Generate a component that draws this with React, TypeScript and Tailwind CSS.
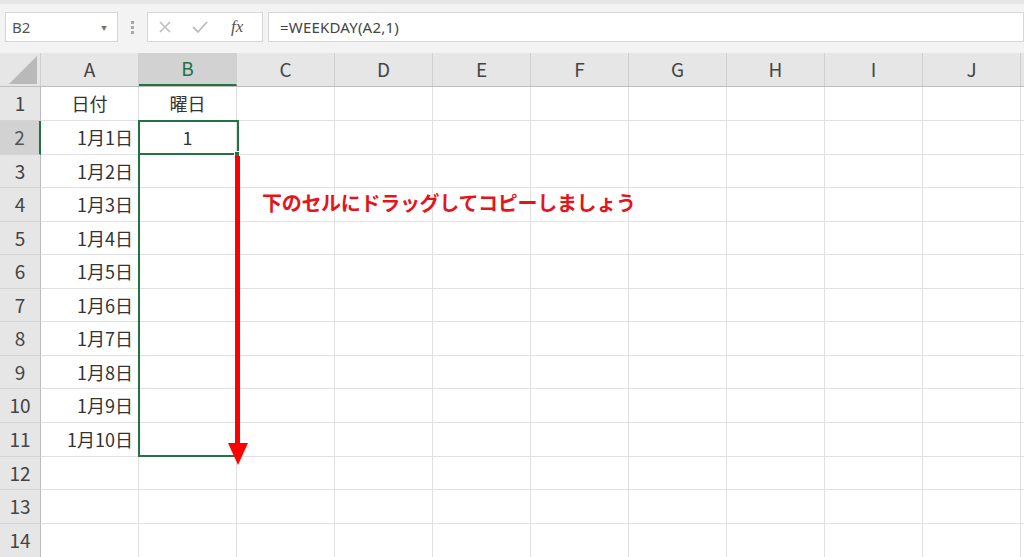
import React from "react";

const columns = ["A", "B", "C", "D", "E", "F", "G", "H", "I", "J"];

// row heights alternate a little in the shot (33.5px average)
const rows = [
  { n: 1, h: "h-[34px]", a: "日付", b: "曜日" },
  { n: 2, h: "h-[34px]", a: "1月1日", b: "1" },
  { n: 3, h: "h-[33px]", a: "1月2日", b: "" },
  { n: 4, h: "h-[34px]", a: "1月3日", b: "" },
  { n: 5, h: "h-[33px]", a: "1月4日", b: "" },
  { n: 6, h: "h-[34px]", a: "1月5日", b: "" },
  { n: 7, h: "h-[33px]", a: "1月6日", b: "" },
  { n: 8, h: "h-[34px]", a: "1月7日", b: "" },
  { n: 9, h: "h-[33px]", a: "1月8日", b: "" },
  { n: 10, h: "h-[34px]", a: "1月9日", b: "" },
  { n: 11, h: "h-[34px]", a: "1月10日", b: "" },
  { n: 12, h: "h-[33px]", a: "", b: "" },
  { n: 13, h: "h-[34px]", a: "", b: "" },
  { n: 14, h: "h-[34px]", a: "", b: "" },
];

const font = "font-['Noto_Sans_CJK_JP','Noto_Sans',sans-serif]";

export default function App() {
  return (
    <div
      className={`w-[1024px] h-[557px] overflow-hidden bg-[#f3f3f3] text-[#444] ${font}`}
    >
      {/* top strip */}
      <div className="h-[12px] border-t-[4px] border-[#e6e6e6]" />

      {/* formula bar */}
      <div className="h-[30px] flex items-stretch">
        <div className="ml-[5px] w-[113px] bg-white border border-[#d6d6d6] flex items-center justify-between pl-[6px] pr-[10px]">
          <span className="text-[15px] text-[#555] font-['Noto_Sans',sans-serif]">B2</span>
          <span className="text-[6px] text-[#777]">▼</span>
        </div>
        <div className="w-[29px] flex items-center justify-center">
          <div className="flex flex-col gap-[2px]">
            <span className="w-[3px] h-[3px] bg-[#a8a8a8]" />
            <span className="w-[3px] h-[3px] bg-[#a8a8a8]" />
            <span className="w-[3px] h-[3px] bg-[#a8a8a8]" />
          </div>
        </div>
        <div className="w-[116px] bg-white border border-[#d6d6d6] flex items-center pl-[10px] gap-[20px]">
          <svg width="14" height="14" viewBox="0 0 14 14">
            <path d="M2 2 L12 12 M12 2 L2 12" stroke="#bdbdbd" strokeWidth="1.6" fill="none" />
          </svg>
          <svg width="16" height="14" viewBox="0 0 16 14">
            <path d="M1 7 L6 12 L15 2" stroke="#bdbdbd" strokeWidth="1.8" fill="none" />
          </svg>
          <span className="text-[17px] italic font-['Liberation_Serif',serif] text-[#555] ml-[3px]">
            fx
          </span>
        </div>
        <div className="ml-[5px] flex-1 bg-white border border-[#d6d6d6] flex items-center pl-[11px]">
          <span className="text-[15px] text-[#444] font-['Noto_Sans',sans-serif] tracking-[0.2px]">
            =WEEKDAY(A2,1)
          </span>
        </div>
      </div>

      <div className="h-[11px]" />

      {/* column headers */}
      <div className="flex h-[34px] bg-[#e6e6e6] border-b border-[#bdbdbd]">
        <div className="w-[41px] shrink-0 border-r border-[#cfcfcf] flex items-end justify-end pr-[3px] pb-[2px]">
          <svg width="28" height="28" viewBox="0 0 28 28">
            <polygon points="28,0 28,28 0,28" fill="#b9b9b9" />
          </svg>
        </div>
        {columns.map((c) => (
          <div
            key={c}
            className={`w-[98px] shrink-0 flex items-center justify-center text-[19px] border-r border-[#d0d0d0] ${
              c === "B"
                ? "bg-[#d2d2d2] text-[#217346] border-b-2 border-b-[#217346]"
                : "text-[#444]"
            }`}
          >
            {c}
          </div>
        ))}
        <div className="flex-1" />
      </div>

      {/* grid body */}
      <div className="relative bg-white">
        {rows.map((r) => (
          <div key={r.n} className={`flex ${r.h}`}>
            <div
              className={`w-[41px] shrink-0 flex items-center justify-center text-[19px] border-b border-[#d4d4d4] ${
                r.n === 2
                  ? "bg-[#d2d2d2] border-r-2 border-r-[#217346] text-[#555]"
                  : "bg-[#e6e6e6] border-r border-r-[#bdbdbd] text-[#444]"
              }`}
            >
              {r.n}
            </div>
            <div
              className={`w-[98px] shrink-0 border-r border-b border-[#e1e1e1] flex items-center text-[18px] text-[#333] ${
                r.n === 1 ? "justify-center" : "justify-end pr-[5px]"
              }`}
            >
              {r.a}
            </div>
            <div className="w-[98px] shrink-0 border-r border-b border-[#e1e1e1] flex items-center justify-center text-[18px] text-[#333]">
              {r.b}
            </div>
            {columns.slice(2).map((c) => (
              <div key={c} className="w-[98px] shrink-0 border-r border-b border-[#e1e1e1]" />
            ))}
            <div className="flex-1 border-b border-[#e1e1e1]" />
          </div>
        ))}

        {/* selection range B2:B11 */}
        <div className="absolute left-[138px] top-[33px] w-[101px] h-[337px] border-2 border-[#217346]" />
        {/* active cell B2 bottom edge */}
        <div className="absolute left-[138px] top-[66px] w-[101px] h-[2px] bg-[#217346]" />
        {/* fill handle */}
        <div className="absolute left-[234px] top-[64px] w-[6px] h-[6px] bg-[#217346] border border-white" />

        {/* red arrow */}
        <svg
          className="absolute left-[224px] top-[69px]"
          width="28"
          height="312"
          viewBox="0 0 28 312"
        >
          <rect x="11" y="0" width="5" height="290" fill="#ff0000" />
          <polygon points="4,287 24,287 14,309" fill="#ff0000" />
        </svg>

        {/* instruction */}
        <div className="absolute left-[262px] top-[103px] text-[20px] leading-[26px] font-bold text-[#e5141b] tracking-[-0.3px] whitespace-nowrap">
          下のセルにドラッグしてコピーしましょう
        </div>
      </div>
    </div>
  );
}
